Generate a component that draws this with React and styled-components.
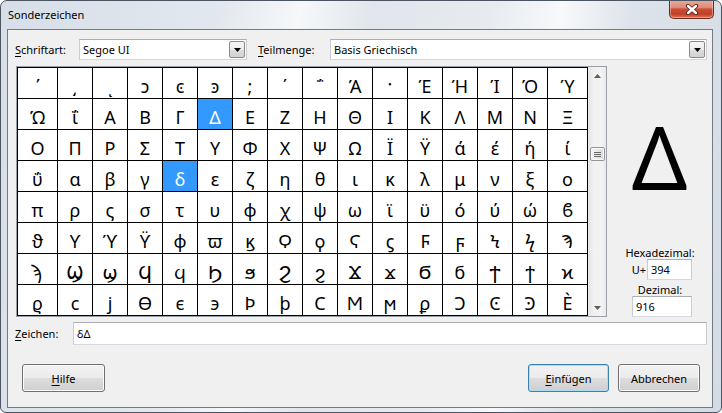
import React from 'react';
import styled, { createGlobalStyle } from 'styled-components';

const Global = createGlobalStyle`
  html, body { margin: 0; padding: 0; background: #ffffff; }
  body { font-family: "Noto Sans", "DejaVu Sans", sans-serif; font-size: 11px; color: #000; }
  * { box-sizing: border-box; }
`;

const Window = styled.div`
  width: 722px;
  height: 413px;
  border: 1px solid #4b5561;
  border-radius: 7px 7px 6px 6px;
  background: linear-gradient(100deg, #d6dee8 0%, #e2e8ee 28%, #f6f8fa 38%, #e0e6ec 47%, #e7ebf0 62%, #f7f9fb 71%, #dde3ea 80%, #d3dbe4 100%);
  display: flex;
  flex-direction: column;
  overflow: hidden;
`;

const TitleBar = styled.div`
  height: 28px;
  display: flex;
  align-items: flex-start;
  padding: 0 7px 0 7px;
`;

const Title = styled.div`
  margin-top: 7px;
  font-size: 11px;
  line-height: 14px;
  color: #000;
  flex: 1;
`;

const CloseButton = styled.div`
  width: 45px;
  height: 19px;
  margin-top: -1px;
  border: 1px solid #6b2a1c;
  border-top: none;
  border-radius: 0 0 5px 5px;
  background: linear-gradient(180deg, #e9ab9c 0%, #dc8a77 42%, #c9503a 50%, #c23f26 78%, #d87552 100%);
  box-shadow: inset 0 0 0 1px rgba(255, 220, 210, 0.45);
  display: flex;
  align-items: center;
  justify-content: center;
`;

const Client = styled.div`
  flex: 1;
  margin: 0 8px 4px 6px;
  border: 1px solid #707b87;
  background: #f0f0f0;
  display: flex;
  flex-direction: column;
`;

const TopRow = styled.div`
  margin-top: 9px;
  height: 21px;
  display: flex;
  align-items: center;
  padding: 0 5px 0 7px;
`;

const Label = styled.div`
  width: ${p => p.$w}px;
  margin-left: ${p => p.$ml || 0}px;
  font-size: 11px;
  line-height: 14px;
  white-space: nowrap;
`;

const Acc = styled.span`
  text-decoration: underline;
  text-underline-offset: 2px;
`;

const Combo = styled.div`
  position: relative;
  height: 21px;
  width: ${p => (p.$w ? `${p.$w}px` : 'auto')};
  flex: ${p => (p.$w ? 'none' : '1')};
  background: #fff;
  border: 1px solid #abadb3;
  border-color: #abadb3 #c9ccd2 #d5d9df #c9ccd2;
  display: flex;
  align-items: center;
  padding-left: 3px;
  font-size: 11px;
`;

const DropButton = styled.div`
  position: absolute;
  top: 1px;
  right: 1px;
  width: 16px;
  height: 17px;
  border: 1px solid #8a8a8a;
  border-radius: 2px;
  background: linear-gradient(180deg, #f6f6f6 0%, #ececec 50%, #dedede 51%, #d2d2d2 100%);
  display: flex;
  align-items: center;
  justify-content: center;
`;

const MainRow = styled.div`
  margin-top: 6px;
  height: 251px;
  display: flex;
  padding-left: 8px;
`;

const GridBox = styled.div`
  display: flex;
  border: 1px solid #9aa0a8;
  background: #fff;
`;

const Chars = styled.div`
  display: grid;
  grid-template-columns: 39px repeat(14, 34px) 39px;
  grid-auto-rows: 30px;
  gap: 1px;
  padding: 1px;
  background: #000;
`;

const Cell = styled.div`
  background: ${p => (p.$sel ? '#3399ff' : '#ffffff')};
  color: ${p => (p.$sel ? '#ffffff' : '#000000')};
  display: flex;
  align-items: center;
  justify-content: center;
  padding-top: 5px;
  font-family: "Noto Sans", "DejaVu Sans", sans-serif;
  font-size: 18px;
  line-height: 1;
`;

const ScrollBar = styled.div`
  width: 18px;
  display: flex;
  flex-direction: column;
  align-items: center;
  background: linear-gradient(90deg, #e4e4e4 0%, #f1f1f1 25%, #f3f3f3 75%, #e9e9e9 100%);
  border-left: 1px solid #ececec;
`;

const Arrow = styled.div`
  height: 17px;
  width: 100%;
  display: flex;
  align-items: center;
  justify-content: center;
`;

const Track = styled.div`
  flex: 1;
  width: 100%;
  display: flex;
  flex-direction: column;
  align-items: center;
  padding-top: 63px;
`;

const Thumb = styled.div`
  width: 15px;
  height: 14px;
  border: 1px solid #959595;
  border-radius: 2px;
  background: linear-gradient(90deg, #f3f3f3 0%, #e8e8e8 50%, #dadada 100%);
  box-shadow: inset 0 0 0 1px #fbfbfb;
  display: flex;
  align-items: center;
  justify-content: center;
`;

const Preview = styled.div`
  flex: 1;
  display: flex;
  flex-direction: column;
`;

const BigGlyph = styled.div`
  margin-top: 47px;
  height: 87px;
  text-align: center;
  font-family: "Noto Sans", "DejaVu Sans", sans-serif;
  font-size: 87px;
  line-height: 87px;
`;

const CodeGroup = styled.div`
  margin-top: auto;
  margin-left: auto;
  margin-right: 20px;
  width: 64px;
  display: flex;
  flex-direction: column;
  align-items: center;
`;

const SmallLabel = styled.div`
  height: 13px;
  line-height: 13px;
  font-size: 11px;
  white-space: nowrap;
  margin-top: ${p => p.$mt || 0}px;
`;

const HexRow = styled.div`
  align-self: flex-end;
  display: flex;
  align-items: center;
  gap: 1px;
`;

const Field = styled.div`
  height: ${p => p.$h || 21}px;
  width: ${p => (p.$w ? `${p.$w}px` : 'auto')};
  flex: ${p => (p.$w ? 'none' : '1')};
  align-self: ${p => (p.$end ? 'flex-end' : 'auto')};
  background: #fff;
  border: 1px solid #abadb3;
  border-color: #abadb3 #c9ccd2 #d5d9df #c9ccd2;
  display: flex;
  align-items: center;
  padding-left: 3px;
  font-size: 11px;
`;

const CharRow = styled.div`
  margin-top: 5px;
  height: 23px;
  display: flex;
  align-items: center;
  padding: 0 5px 0 7px;
`;

const ButtonRow = styled.div`
  margin-top: 19px;
  height: 28px;
  display: flex;
  align-items: stretch;
  padding: 0 12px 0 14px;
  gap: 9px;
`;

const Button = styled.div`
  width: ${p => p.$w}px;
  margin-right: ${p => (p.$push ? 'auto' : '0')};
  border: 1px solid ${p => (p.$def ? '#3c7fb1' : '#707070')};
  border-radius: 3px;
  background: linear-gradient(180deg, #f2f2f2 0%, #ebebeb 50%, #dddddd 51%, #cfcfcf 100%);
  box-shadow: inset 0 0 0 1px ${p => (p.$def ? '#a8dcf4' : '#fbfbfb')};
  display: flex;
  align-items: center;
  justify-content: center;
  font-size: 11px;
`;

const START = 0x374;
const SKIP = new Set([0x376, 0x377, 0x378, 0x379, 0x37f, 0x380, 0x381, 0x382, 0x383, 0x38b, 0x38d, 0x3a2, 0x3cf]);
const codes = [];
for (let c = START; codes.length < 128; c++) {
  if (!SKIP.has(c)) codes.push(c);
}
const SELECTED = new Set([0x394, 0x3b4]);

export default function App() {
  return (
    <>
      <Global />
      <Window>
        <TitleBar>
          <Title>Sonderzeichen</Title>
          <CloseButton>
            <svg width="14" height="11" viewBox="0 0 14 11">
              <path d="M3 2 L11 9 M11 2 L3 9" stroke="#5a2418" strokeWidth="4.2" strokeLinecap="round" fill="none" />
              <path d="M3 2 L11 9 M11 2 L3 9" stroke="#ffffff" strokeWidth="2.4" strokeLinecap="round" fill="none" />
            </svg>
          </CloseButton>
        </TitleBar>
        <Client>
          <TopRow>
            <Label $w={64}><Acc>S</Acc>chriftart:</Label>
            <Combo $w={168}>
              Segoe UI
              <DropButton>
                <svg width="7" height="4" viewBox="0 0 7 4"><path d="M0 0 H7 L3.5 4 Z" fill="#000" /></svg>
              </DropButton>
            </Combo>
            <Label $w={72} $ml={11}><Acc>T</Acc>eilmenge:</Label>
            <Combo>
              Basis Griechisch
              <DropButton>
                <svg width="7" height="4" viewBox="0 0 7 4"><path d="M0 0 H7 L3.5 4 Z" fill="#000" /></svg>
              </DropButton>
            </Combo>
          </TopRow>
          <MainRow>
            <GridBox>
              <Chars>
                {codes.map(c => (
                  <Cell key={c} $sel={SELECTED.has(c)}>{String.fromCharCode(c)}</Cell>
                ))}
              </Chars>
              <ScrollBar>
                <Arrow>
                  <svg width="7" height="4" viewBox="0 0 7 4"><path d="M0 4 H7 L3.5 0 Z" fill="#5f5f5f" /></svg>
                </Arrow>
                <Track>
                  <Thumb>
                    <svg width="7" height="7" viewBox="0 0 7 7">
                      <path d="M0 1.5 H7 M0 3.5 H7 M0 5.5 H7" stroke="#6a6a6a" strokeWidth="1" />
                    </svg>
                  </Thumb>
                </Track>
                <Arrow>
                  <svg width="7" height="4" viewBox="0 0 7 4"><path d="M0 0 H7 L3.5 4 Z" fill="#5f5f5f" /></svg>
                </Arrow>
              </ScrollBar>
            </GridBox>
            <Preview>
              <BigGlyph>Δ</BigGlyph>
              <CodeGroup>
                <SmallLabel>Hexadezimal:</SmallLabel>
                <HexRow>
                  <span>U+</span>
                  <Field $w={45}>394</Field>
                </HexRow>
                <SmallLabel $mt={3}><Acc>D</Acc>ezimal:</SmallLabel>
                <Field $w={60} $end>916</Field>
              </CodeGroup>
            </Preview>
          </MainRow>
          <CharRow>
            <Label $w={58}><Acc>Z</Acc>eichen:</Label>
            <Field $h={23}>δΔ</Field>
          </CharRow>
          <ButtonRow>
            <Button $w={83} $push><span><Acc>H</Acc>ilfe</span></Button>
            <Button $w={81} $def><span><Acc>E</Acc>infügen</span></Button>
            <Button $w={82}>Abbrechen</Button>
          </ButtonRow>
        </Client>
      </Window>
    </>
  );
}
